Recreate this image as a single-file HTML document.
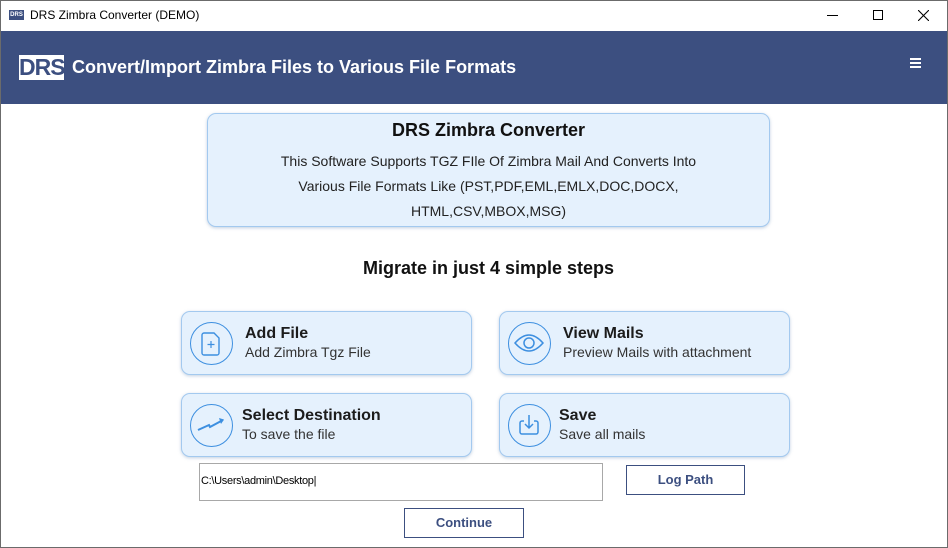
<!DOCTYPE html>
<html><head><style>
*{margin:0;padding:0;box-sizing:border-box}
body{width:948px;height:548px;background:#fff;font-family:"Liberation Sans",sans-serif;position:relative;overflow:hidden}
.abs{position:absolute}
.card{position:absolute;background:#e5f1fd;border:1px solid #a3c9ef;border-radius:9px;box-shadow:0 1px 3px rgba(80,120,170,.35)}
.ic{position:absolute;left:8px;top:10px;width:43px;height:43px;border:1.6px solid #3d8fe0;border-radius:50%}
.t1{position:absolute;font-weight:bold;font-size:16px;color:#1c1c1c}
.t2{position:absolute;font-size:14px;color:#333}
.btn{position:absolute;border:1.5px solid #3c4f80;background:#fff;color:#3c4f80;font-weight:bold;font-size:13px;text-align:center}
</style></head><body>
<div class="abs" style="left:9px;top:10px;width:15px;height:10px;background:#3c4f80;color:#fff;font-size:6px;line-height:10px;text-align:center;font-weight:bold">DRS</div>
<div class="abs" style="left:30px;top:8px;font-size:12px;color:#000">DRS Zimbra Converter (DEMO)</div>
<div class="abs" style="left:827px;top:15px;width:11px;height:1px;background:#000"></div>
<div class="abs" style="left:873px;top:10px;width:10px;height:10px;border:1px solid #000"></div>
<svg class="abs" style="left:918px;top:10px" width="11" height="11"><path d="M0 0L11 11M11 0L0 11" stroke="#000" stroke-width="1.1"/></svg>
<div class="abs" style="left:0;top:31px;width:948px;height:73px;background:#3c4f80"></div>
<div class="abs" style="left:19px;top:55px;width:45px;height:25px;background:#fff;color:#3c4f80;font-weight:bold;font-size:23px;line-height:25px;text-align:center;letter-spacing:-1px">DRS</div>
<div class="abs" style="left:72px;top:57px;color:#fff;font-weight:bold;font-size:18px">Convert/Import Zimbra Files to Various File Formats</div>
<div class="abs" style="left:910px;top:58px;width:11px;height:2px;background:#fff;box-shadow:0 4px 0 #fff,0 8px 0 #fff"></div>

<div class="card" style="left:207px;top:113px;width:563px;height:114px"></div>
<div class="abs" style="left:207px;top:120px;width:563px;text-align:center;font-weight:bold;font-size:18px;color:#111">DRS Zimbra Converter</div>
<div class="abs" style="left:207px;top:149px;width:563px;text-align:center;font-size:14px;color:#222;line-height:25px">This Software Supports TGZ FIle Of Zimbra Mail And Converts Into<br>Various File Formats Like (PST,PDF,EML,EMLX,DOC,DOCX,<br>HTML,CSV,MBOX,MSG)</div>
<div class="abs" style="left:0;top:258px;width:977px;text-align:center;font-weight:bold;font-size:18px;color:#111">Migrate in just 4 simple steps</div>

<div class="card" style="left:181px;top:311px;width:291px;height:64px"><div class="ic"><svg width="40" height="40" style="position:absolute;left:0;top:0"><path d="M13 10h10l5 5v15a2 2 0 0 1-2 2H13a2 2 0 0 1-2-2V12a2 2 0 0 1 2-2z" fill="none" stroke="#3d8fe0" stroke-width="1.4"/><path d="M20 18v7M16.5 21.5h7" stroke="#3d8fe0" stroke-width="1.2"/></svg></div>
<div class="t1" style="left:63px;top:13px">Add File</div><div class="t2" style="left:63px;top:32px">Add Zimbra Tgz File</div></div>
<div class="card" style="left:499px;top:311px;width:291px;height:64px"><div class="ic"><svg width="40" height="40" style="position:absolute;left:0;top:0"><path d="M6 20Q20 4 34 20Q20 36 6 20Z" fill="none" stroke="#3d8fe0" stroke-width="1.5"/><circle cx="20" cy="20" r="5" fill="none" stroke="#3d8fe0" stroke-width="1.5"/></svg></div>
<div class="t1" style="left:63px;top:13px">View Mails</div><div class="t2" style="left:63px;top:32px">Preview Mails with attachment</div></div>
<div class="card" style="left:181px;top:393px;width:291px;height:64px"><div class="ic"><svg width="40" height="40" style="position:absolute;left:0;top:0"><path d="M7 25L18 20L19 22L32 15" fill="none" stroke="#3d8fe0" stroke-width="2"/><path d="M28 13L33 14.5L30 19Z" fill="#3d8fe0"/></svg></div>
<div class="t1" style="left:60px;top:13px">Select Destination</div><div class="t2" style="left:60px;top:32px">To save the file</div></div>
<div class="card" style="left:499px;top:393px;width:291px;height:64px"><div class="ic"><svg width="40" height="40" style="position:absolute;left:0;top:0"><path d="M15 16h-2a2 2 0 0 0-2 2v9a2 2 0 0 0 2 2h14a2 2 0 0 0 2-2v-9a2 2 0 0 0-2-2h-2" fill="none" stroke="#3d8fe0" stroke-width="1.5"/><path d="M20 10v13M16 19l4 4 4-4" fill="none" stroke="#3d8fe0" stroke-width="1.5"/></svg></div>
<div class="t1" style="left:59px;top:13px">Save</div><div class="t2" style="left:59px;top:32px">Save all mails</div></div>

<div class="abs" style="left:199px;top:463px;width:404px;height:38px;border:1px solid #a8a8a8"></div>
<div class="abs" style="left:201px;top:475px;font-size:11px;color:#000;letter-spacing:-0.3px">C:\Users\admin\Desktop|</div>
<div class="btn" style="left:626px;top:465px;width:119px;height:30px;line-height:27px">Log Path</div>
<div class="btn" style="left:404px;top:508px;width:120px;height:30px;line-height:28px">Continue</div>
<div class="abs" style="left:0;top:0;width:948px;height:548px;border:1px solid #6b6b6b;pointer-events:none"></div>
</body></html>
